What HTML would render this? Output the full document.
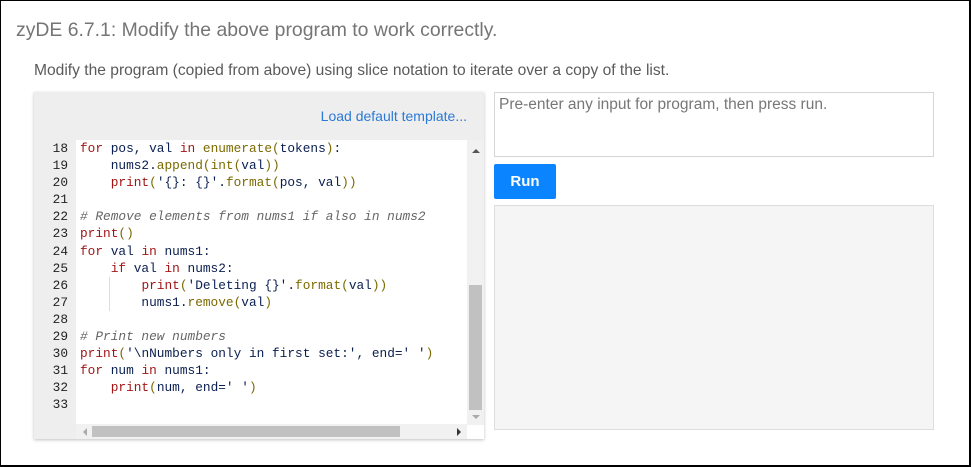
<!DOCTYPE html>
<html><head><meta charset="utf-8"><style>
*{margin:0;padding:0;box-sizing:border-box}
body{width:971px;height:467px;background:#fff;overflow:hidden;position:relative;font-family:"Liberation Sans",sans-serif}
.frame{position:absolute;left:0;top:0;width:971px;height:467px;border:1px solid #000;border-right-width:2px;border-bottom-width:2px}
.title{position:absolute;left:16px;top:19px;font-size:19.4px;color:#757575;white-space:nowrap}
.sub{position:absolute;left:34px;top:62px;font-size:15.6px;color:#5a5a5a;white-space:nowrap}
.ed{position:absolute;left:34px;top:92px;width:450px;height:347px;background:#eee;box-shadow:0 1px 3px rgba(0,0,0,.25)}
.load{position:absolute;right:17px;top:16px;font-size:14px;color:#2b79d6}
.code{position:absolute;left:0;top:48px;width:450px;height:299px;background:#fff}
.gut{position:absolute;left:0;top:0;width:42px;height:299px;background:#eee}
.lines{position:absolute;left:0;top:0;font-family:"Liberation Mono",monospace;font-size:12.8px;line-height:17.1px;white-space:pre;color:#0a1e50}
.ln{display:inline-block;width:46px;text-align:right;padding-right:12px;color:#222}
.k{color:#a31515}.f{color:#7b6a00}.c{color:#666;font-style:italic}
.guide{position:absolute;left:75px;top:137px;width:1px;height:34px;background:#ddd}
.vs{position:absolute;left:433px;top:0;width:17px;height:285px;background:#f1f1f1}
.vt{position:absolute;left:2px;top:145px;width:13px;height:125px;background:#c1c1c1}
.hs{position:absolute;left:42px;top:284px;width:391px;height:15px;background:#f1f1f1}
.ht{position:absolute;left:16px;top:2px;width:308px;height:11px;background:#c1c1c1}
.ar{position:absolute;width:0;height:0}
.inp{position:absolute;left:494px;top:92px;width:440px;height:65px;border:1px solid #d5d5d5;font-size:15.5px;color:#777;padding:3px 4px}
.run{position:absolute;left:494px;top:164px;width:62px;height:35px;background:#0a84ff;border-radius:2px;color:#fff;font-weight:bold;font-size:15px;text-align:center;line-height:35px}
.out{position:absolute;left:494px;top:205px;width:440px;height:225px;background:#f5f5f5;border:1px solid #ddd}
</style></head><body>
<div class="frame"></div>
<div class="title">zyDE 6.7.1: Modify the above program to work correctly.</div>
<div class="sub">Modify the program (copied from above) using slice notation to iterate over a copy of the list.</div>
<div class="ed">
<div class="load">Load default template...</div>
<div class="code"><div class="gut"></div>
<div class="guide"></div>
<div class="lines"><span class="ln">18</span><span class="k">for</span> pos, val <span class="k">in</span> <span class="f">enumerate(</span>tokens<span class="f">)</span>:
<span class="ln">19</span>    nums2.<span class="f">append(</span><span class="f">int(</span>val<span class="f">))</span>
<span class="ln">20</span>    <span class="k">print</span><span class="f">(</span>'{}: {}'.<span class="f">format(</span>pos, val<span class="f">))</span>
<span class="ln">21</span>
<span class="ln">22</span><span class="c"># Remove elements from nums1 if also in nums2</span>
<span class="ln">23</span><span class="k">print</span><span class="f">()</span>
<span class="ln">24</span><span class="k">for</span> val <span class="k">in</span> nums1:
<span class="ln">25</span>    <span class="k">if</span> val <span class="k">in</span> nums2:
<span class="ln">26</span>        <span class="k">print</span><span class="f">(</span>'Deleting {}'.<span class="f">format(</span>val<span class="f">))</span>
<span class="ln">27</span>        nums1.<span class="f">remove(</span>val<span class="f">)</span>
<span class="ln">28</span>
<span class="ln">29</span><span class="c"># Print new numbers</span>
<span class="ln">30</span><span class="k">print</span><span class="f">(</span>'\nNumbers only in first set:', end=' '<span class="f">)</span>
<span class="ln">31</span><span class="k">for</span> num <span class="k">in</span> nums1:
<span class="ln">32</span>    <span class="k">print</span><span class="f">(</span>num, end=' '<span class="f">)</span>
<span class="ln">33</span></div>
<div class="vs"><div class="vt"></div>
<div class="ar" style="left:5px;top:9px;border-left:4px solid transparent;border-right:4px solid transparent;border-bottom:4px solid #555"></div>
<div class="ar" style="left:5px;top:275px;border-left:4px solid transparent;border-right:4px solid transparent;border-top:4px solid #aaa"></div>
</div>
<div class="hs"><div class="ht"></div>
<div class="ar" style="left:7px;top:4px;border-top:4px solid transparent;border-bottom:4px solid transparent;border-right:4px solid #aaa"></div>
<div class="ar" style="left:381px;top:4px;border-top:4px solid transparent;border-bottom:4px solid transparent;border-left:4px solid #333"></div>
</div>
</div>
</div>
<div class="inp">Pre-enter any input for program, then press run.</div>
<div class="run">Run</div>
<div class="out"></div>
</body></html>
